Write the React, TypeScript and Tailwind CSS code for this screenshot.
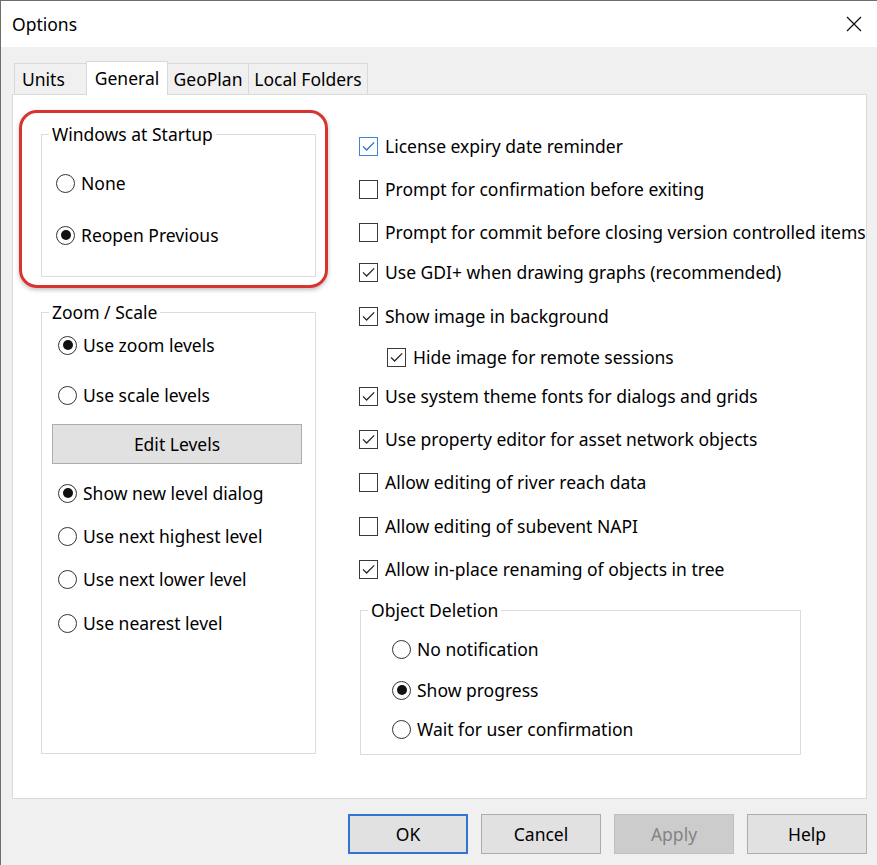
// Options dialog – General tab

type Row = {
  label: string
  checked: boolean
  blue?: boolean
  indent?: boolean
  mt: string
}

const rows: Row[] = [
  { label: 'License expiry date reminder', checked: true, blue: true, mt: 'mt-[41px]' },
  { label: 'Prompt for confirmation before exiting', checked: false, mt: 'mt-[23px]' },
  { label: 'Prompt for commit before closing version controlled items', checked: false, mt: 'mt-[23px]' },
  { label: 'Use GDI+ when drawing graphs (recommended)', checked: true, mt: 'mt-[20px]' },
  { label: 'Show image in background', checked: true, mt: 'mt-[24px]' },
  { label: 'Hide image for remote sessions', checked: true, indent: true, mt: 'mt-[21px]' },
  { label: 'Use system theme fonts for dialogs and grids', checked: true, mt: 'mt-[19px]' },
  { label: 'Use property editor for asset network objects', checked: true, mt: 'mt-[23px]' },
  { label: 'Allow editing of river reach data', checked: false, mt: 'mt-[23px]' },
  { label: 'Allow editing of subevent NAPI', checked: false, mt: 'mt-[24px]' },
  { label: 'Allow in-place renaming of objects in tree', checked: true, mt: 'mt-[23px]' },
]

function CheckBox({ checked, blue }: { checked: boolean; blue?: boolean }) {
  return (
    <span
      className={`flex items-center justify-center w-[19px] h-[19px] shrink-0 border bg-white ${
        blue ? 'border-[#3a86dc]' : 'border-[#3a3a3a]'
      }`}
    >
      {checked && (
        <svg viewBox="0 0 17 17" className="w-[17px] h-[17px]" fill="none">
          <path d="M3 8.4l3.6 3.6L14.2 4.4" stroke={blue ? '#2a6fc6' : '#262626'} strokeWidth="1.3" />
        </svg>
      )}
    </span>
  )
}

function Radio({ on }: { on?: boolean }) {
  return (
    <span className="flex items-center justify-center w-[19px] h-[19px] shrink-0 rounded-full border-[1.5px] border-[#333] bg-white">
      {on && <span className="w-[10px] h-[10px] rounded-full bg-[#111]" />}
    </span>
  )
}

function RadioRow({ label, on, mt }: { label: string; on?: boolean; mt: string }) {
  return (
    <div className={`flex items-center h-[20px] gap-[6px] whitespace-nowrap ${mt}`}>
      <Radio on={on} />
      <span>{label}</span>
    </div>
  )
}

function Legend({ children }: { children: string }) {
  return <legend className="ml-[7px] px-[3px] leading-[20px]">{children}</legend>
}

function Button({ label, kind }: { label: string; kind?: 'default' | 'disabled' }) {
  const cls =
    kind === 'default'
      ? 'border-2 border-[#2f76d2] bg-[#e1e1e1] text-black'
      : kind === 'disabled'
      ? 'border border-[#bfbfbf] bg-[#cccccc] text-[#838383]'
      : 'border border-[#adadad] bg-[#e1e1e1] text-black'
  return <div className={`flex items-center justify-center w-[120px] h-[40px] ${cls}`}>{label}</div>
}

export default function App() {
  return (
    <div className="w-[877px] h-[865px] overflow-hidden flex flex-col bg-[#f0f0f0] border-l border-t border-[#6e6e6e] font-['Noto_Sans',sans-serif] text-[17.5px] text-black">
      {/* title bar */}
      <div className="flex items-center justify-between h-[46px] bg-white pl-[11px] pr-[15px]">
        <span>Options</span>
        <svg viewBox="0 0 16 16" className="w-[16px] h-[16px]" fill="none">
          <path d="M1 1l14 14M15 1L1 15" stroke="#111" strokeWidth="1.3" />
        </svg>
      </div>

      <div className="flex flex-col pl-[11px]">
        {/* tabs */}
        <div className="flex items-end h-[47px] pl-[2px]">
          <div className="flex items-center w-[73px] h-[31px] pl-[7px] border border-b-0 border-[#d9d9d9]">Units</div>
          <div className="relative z-10 flex items-center justify-center -ml-px w-[82px] h-[34px] -mb-px bg-white border border-b-0 border-[#d9d9d9]">
            General
          </div>
          <div className="flex items-center justify-center -ml-px w-[82px] h-[31px] border border-b-0 border-[#d9d9d9]">GeoPlan</div>
          <div className="flex items-center justify-center -ml-px w-[120px] h-[31px] border border-b-0 border-[#d9d9d9]">Local Folders</div>
        </div>

        {/* tab page */}
        <div className="flex w-[855px] h-[705px] bg-white border border-[#d9d9d9]">
          {/* left column */}
          <div className="flex flex-col ml-[28px] w-[275px]">
            <div className="relative mt-[29px]">
              <fieldset className="border border-[#dcdcdc]">
                <Legend>Windows at Startup</Legend>
                <div className="pl-[14px] pb-[31px]">
                  <RadioRow label="None" mt="mt-[29px]" />
                  <RadioRow label="Reopen Previous" on mt="mt-[32px]" />
                </div>
              </fieldset>
              <div className="absolute -left-[22px] -top-[14px] -right-[12px] -bottom-[11px] rounded-[18px] border-[3px] border-[#d8332e] shadow-[0_2px_4px_rgba(0,0,0,0.25)] pointer-events-none" />
            </div>

            <fieldset className="mt-[25px] border border-[#dcdcdc]">
              <Legend>Zoom / Scale</Legend>
              <div className="pl-[16px] pb-[120px]">
                <RadioRow label="Use zoom levels" on mt="mt-[13px]" />
                <RadioRow label="Use scale levels" mt="mt-[30px]" />
                <div className="flex items-center justify-center -ml-[6px] mt-[19px] w-[250px] h-[40px] bg-[#e1e1e1] border border-[#adadad]">
                  Edit Levels
                </div>
                <RadioRow label="Show new level dialog" on mt="mt-[19px]" />
                <RadioRow label="Use next highest level" mt="mt-[23px]" />
                <RadioRow label="Use next lower level" mt="mt-[23px]" />
                <RadioRow label="Use nearest level" mt="mt-[24px]" />
              </div>
            </fieldset>
          </div>

          {/* right column */}
          <div className="flex flex-col ml-[43px]">
            {rows.map((r) => (
              <div
                key={r.label}
                className={`flex items-center h-[20px] gap-[7px] whitespace-nowrap ${r.mt} ${r.indent ? 'ml-[28px]' : ''}`}
              >
                <CheckBox checked={r.checked} blue={r.blue} />
                <span>{r.label}</span>
              </div>
            ))}

            <fieldset className="mt-[21px] ml-px w-[441px] border border-[#dcdcdc]">
              <Legend>Object Deletion</Legend>
              <div className="pl-[31px] pb-[15px]">
                <RadioRow label="No notification" mt="mt-[19px]" />
                <RadioRow label="Show progress" on mt="mt-[21px]" />
                <RadioRow label="Wait for user confirmation" mt="mt-[19px]" />
              </div>
            </fieldset>
          </div>
        </div>

        {/* buttons */}
        <div className="flex justify-end gap-[13px] w-[855px] mt-[15px]">
          <Button label="OK" kind="default" />
          <Button label="Cancel" />
          <Button label="Apply" kind="disabled" />
          <Button label="Help" />
        </div>
      </div>
    </div>
  )
}
